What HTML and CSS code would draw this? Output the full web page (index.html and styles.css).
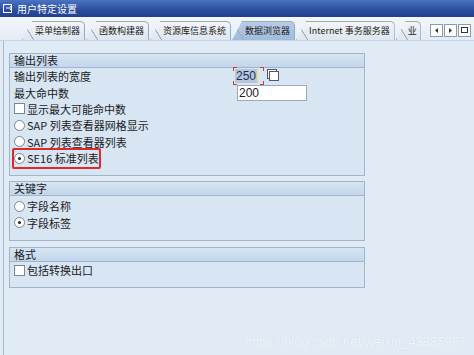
FILE: index.html
```html
<!DOCTYPE html>
<html>
<head>
<meta charset="utf-8">
<link rel="stylesheet" href="styles.css">
</head>
<body>
<div class="win">
  <div class="titlebar">
    <svg class="ticon" width="11" height="11" viewBox="0 0 11 11"><rect x="0.5" y="1.5" width="8" height="8" fill="none" stroke="#fff"/><path d="M3 5 L9 5 M7 3 L9 5 L7 7" stroke="#fff" fill="none"/></svg>
    <span class="ttext">用户特定设置</span>
  </div>
  <div class="tabstrip">
    <div class="tab t1">菜单绘制器</div>
    <div class="tab">函数构建器</div>
    <div class="tab">资源库信息系统</div>
    <div class="tab active">数据浏览器</div>
    <div class="tab">Internet 事务服务器</div>
    <div class="tab tshort">业</div>
    <div class="navs">
      <span class="nb"><svg width="7" height="7" viewBox="0 0 7 7"><path d="M5 1 L2 3.5 L5 6Z" fill="#333"/></svg></span>
      <span class="nb"><svg width="7" height="7" viewBox="0 0 7 7"><path d="M2 1 L5 3.5 L2 6Z" fill="#333"/></svg></span>
      <span class="nb"><svg width="7" height="7" viewBox="0 0 7 7"><rect x="0.5" y="0.5" width="6" height="5" fill="none" stroke="#333"/></svg></span>
    </div>
  </div>
  <div class="panel">
    <div class="group g1">
      <div class="ghead">输出列表</div>
      <div class="gbody">
        <div class="row"><span class="lbl">输出列表的宽度</span><span class="inp sel">250<span class="caret"></span><i class="c tl"></i><i class="c tr"></i><i class="c bl"></i><i class="c br"></i></span><span class="f4"></span></div>
        <div class="row"><span class="lbl">最大命中数</span><span class="inp wide">200</span></div>
        <div class="row"><span class="cb"></span><span>显示最大可能命中数</span></div>
        <div class="row"><span class="rb"></span><span>SAP 列表查看器网格显示</span></div>
        <div class="row"><span class="rb"></span><span>SAP 列表查看器列表</span></div>
        <div class="row hl"><span class="rb on"></span><span>SE16 标准列表</span></div>
      </div>
    </div>
    <div class="group g2">
      <div class="ghead">关键字</div>
      <div class="gbody">
        <div class="row"><span class="rb"></span><span>字段名称</span></div>
        <div class="row"><span class="rb on"></span><span>字段标签</span></div>
      </div>
    </div>
    <div class="group g3">
      <div class="ghead">格式</div>
      <div class="gbody">
        <div class="row"><span class="cb"></span><span>包括转换出口</span></div>
      </div>
    </div>
    <div class="wm">https://blog.csdn.net/weixin_43885987</div>
  </div>
</div>
</body>
</html>
```
FILE: styles.css
```css
html, body { margin: 0; padding: 0; }
body {
  width: 474px; height: 355px; overflow: hidden;
  font-family: "Noto Sans CJK SC", "Noto Sans", sans-serif;
  font-size: 11px; color: #1c1c1c;
  background: #e1ebf5;
}
.win { display: flex; flex-direction: column; height: 355px; }
.titlebar {
  height: 17px; flex: none;
  background: linear-gradient(#4a74c2, #2a4d9e 60%, #22418c);
  display: flex; align-items: center; gap: 3px; padding-left: 3px;
  color: #fff;
}
.ttext { font-size: 10px; line-height: 17px; }
.tabstrip {
  height: 23px; flex: none;
  background: linear-gradient(#f4f7fb, #e4ecf6);
  display: flex; align-items: flex-end; padding-left: 22px;
  border-bottom: 1px solid #c4d4e8;
  overflow: hidden;
}
.tab {
  flex: none;
  height: 18px; line-height: 18px;
  padding: 0 4px 0 12px; margin-right: 1px;
  background: linear-gradient(#f2f5f9, #dfe6ef);
  border: 1px solid #9aaabd; border-bottom: none;
  border-radius: 0 5px 0 0;
  clip-path: polygon(0 100%, 10px 0, 100% 0, 100% 100%);
  font-size: 9px; color: #222;
  white-space: nowrap;
  position: relative;
}
.tab::before {
  content: ""; position: absolute; left: 0; top: 0; bottom: 0; width: 11px;
  background: linear-gradient(to top right, transparent calc(50% - 1px), #9aaabd calc(50% - 0.5px), #9aaabd 50%, transparent calc(50% + 0.5px));
}
.tab.active { background: linear-gradient(#b8cde6, #9fbbdd); }
.tshort { padding-right: 3px; padding-left: 11px; }
.navs { flex: none; display: flex; gap: 1px; margin-left: 8px; align-self: center; margin-top: 4px; }
.nb {
  width: 11px; height: 11px; border: 1px solid #8a9bb0; background: #fff;
  display: flex; align-items: center; justify-content: center;
}
.panel {
  flex: 1; margin-left: 3px;
  border-left: 1px solid #a9b9cc;
  background: #e1ebf5;
  padding: 12px 0 0 5px;
  position: relative;
}
.group {
  width: 354px;
  border: 1px solid #a2b4ca;
  background: #d8e5f3;
}
.g2 { margin-top: 5px; }
.g3 { margin-top: 6px; }
.ghead {
  height: 13px; line-height: 13px; padding-left: 4px;
  background: linear-gradient(#d8e5f4, #c3d6ec);
  border-bottom: 1px solid #a2b4ca;
  font-size: 11px;
}
.gbody { padding: 0 0 0 4px; box-sizing: border-box; }
.g1 .gbody { height: 107px; }
.g2 .gbody { height: 44px; padding-top: 2px; }
.g3 .gbody { height: 25px; }
.row {
  height: 16.4px; display: flex; align-items: center; gap: 1px;
  position: relative;
}
.lbl { width: 220px; }
.inp {
  height: 14px; line-height: 14px; font-family: "Liberation Sans", sans-serif; font-size: 12px;
  padding-left: 1px; position: relative;
}
.inp.sel { background: #b9c7d6; width: 22px; color: #1a2f60; display: flex; }
.caret { display: inline-block; width: 5px; height: 13px; background: #f4e08a; margin-left: 1px; }
.c { position: absolute; width: 3px; height: 3px; border-color: #d03a3a; border-style: solid; border-width: 0; }
.c.tl { left: -2px; top: -2px; border-left-width: 1px; border-top-width: 1px; }
.c.tr { right: -6px; top: -2px; border-right-width: 1px; border-top-width: 1px; }
.c.bl { left: -2px; bottom: -2px; border-left-width: 1px; border-bottom-width: 1px; }
.c.br { right: -6px; bottom: -2px; border-right-width: 1px; border-bottom-width: 1px; }
.f4 {
  width: 8px; height: 8px; margin-left: 10px; border: 1px solid #556; background: #fff;
  box-shadow: -2px -2px 0 -1px #fff, -2px -2px 0 0 #556;
}
.inp.wide { width: 67px; background: #fff; border: 1px solid #9aaabd; margin-left: 2px; }
.cb {
  width: 9px; height: 9px; border: 1px solid #7a8798; background: #fff; margin-right: 1px;
}
.rb {
  width: 9px; height: 9px; border: 1px solid #7a8798; border-radius: 50%;
  background: #fff; margin-right: 1px; position: relative;
}
.rb.on::after {
  content: ""; position: absolute; left: 3px; top: 3px; width: 3px; height: 3px;
  border-radius: 50%; background: #222;
}
.hl::before {
  content: ""; position: absolute; left: -2px; top: -2px; width: 85px; height: 17px;
  border: 2px solid #e0272a; border-radius: 2px;
}
.wm {
  position: absolute; right: 8px; bottom: 6px;
  font-family: "Liberation Sans", sans-serif; font-size: 13px;
  color: #f2f6fb;
  text-shadow: 0 0 1px #c8d3df;
}
```
